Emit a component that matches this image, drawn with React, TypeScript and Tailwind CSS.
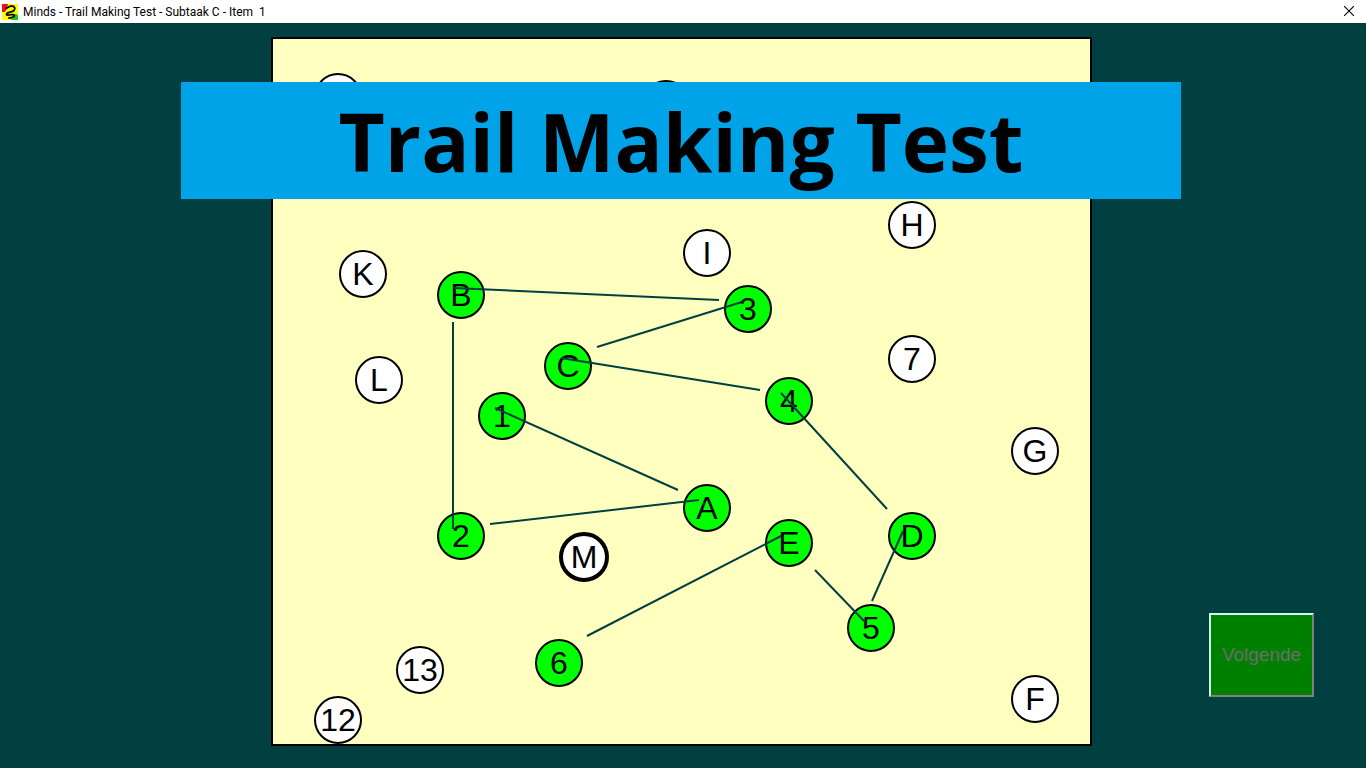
import { useState } from "react";

type TrailNode = { label: string; x: number; y: number; done?: boolean }
type Line = { x1: number; y1: number; x2: number; y2: number }

// centre of every circle, measured from the inside corner of the board
const nodes: TrailNode[] = [
    { label: '', x: 65, y: 58 },
    { label: '', x: 393, y: 65 },
    { label: 'H', x: 639, y: 186 },
    { label: 'I', x: 434, y: 214 },
    { label: 'K', x: 90, y: 235 },
    { label: 'B', x: 188, y: 256, done: true },
    { label: '3', x: 475, y: 270, done: true },
    { label: '7', x: 639, y: 320 },
    { label: 'C', x: 295, y: 327, done: true },
    { label: 'L', x: 106, y: 341 },
    { label: '4', x: 516, y: 362, done: true },
    { label: '1', x: 229, y: 377, done: true },
    { label: 'G', x: 762, y: 412 },
    { label: 'A', x: 434, y: 469, done: true },
    { label: '2', x: 188, y: 497, done: true },
    { label: 'D', x: 639, y: 497, done: true },
    { label: 'E', x: 516, y: 504, done: true },
    { label: 'M', x: 311, y: 518 },
    { label: '5', x: 598, y: 589, done: true },
    { label: '6', x: 286, y: 624, done: true },
    { label: '13', x: 147, y: 631 },
    { label: 'F', x: 762, y: 660 },
    { label: '12', x: 65, y: 681 },
]

const trail: Line[] = [
    { x1: 222, y1: 369, x2: 405, y2: 451 },
    { x1: 426, y1: 461, x2: 217, y2: 485 },
    { x1: 180, y1: 490, x2: 180, y2: 283 },
    { x1: 181, y1: 249, x2: 446, y2: 261 },
    { x1: 469, y1: 263, x2: 324, y2: 308 },
    { x1: 288, y1: 319, x2: 487, y2: 351 },
    { x1: 508, y1: 354, x2: 614, y2: 470 },
    { x1: 630, y1: 492, x2: 599, y2: 562 },
    { x1: 591, y1: 582, x2: 542, y2: 531 },
    { x1: 508, y1: 497, x2: 314, y2: 597 },
]

const Logo = () => (
    <svg viewBox="0 0 16 16" className="size-4" aria-hidden="true">
        <rect width="16" height="16" fill="#ffff00" />
        <path d="M0 0H6L5 4L3 8H0Z" fill="#f01010" />
        <path d="M9 16L11 13L14 10L16 11V16Z" fill="#10d020" />
        <path d="M4 4.500C5.500 4.500 6.500 2 9.500 2C13 2 13.500 5 12 6.500C10 8.500 4.500 8 4.500 10.500C4.500 12 9 9.800 12 10.800C13.500 12 11 14 7 14" fill="none" stroke="#101000" strokeWidth="1.800" strokeLinecap="round" />
    </svg>
)

const TitleBar = () => (
    <header className="flex h-[23px] items-center justify-between bg-white pl-0.5 pr-3">
        <div className="flex items-center gap-[5px]">
            <Logo />
            <span className="whitespace-pre font-['Roboto','Noto_Sans',sans-serif] text-[12px] leading-4 text-black">{'Minds - Trail Making Test - Subtaak C - Item  1'}</span>
        </div>
        <button type="button" aria-label="Sluiten" className="pb-0.5">
            <svg viewBox="0 0 10 10" className="size-2.5" stroke="#000" strokeWidth="1.100">
                <path d="M0 0L10 10M10 0L0 10" />
            </svg>
        </button>
    </header>
)

const Board = () => {
    const [active, setActive] = useState('M')

    return (
        <section className="relative border-2 border-black bg-[#ffffc0]">
            {nodes.map((node) => (
                <button
                    key={`${node.x}-${node.y}`}
                    type="button"
                    onClick={() => setActive(node.label)}
                    style={{ left: node.x, top: node.y }}
                    className={`absolute flex -translate-x-1/2 -translate-y-1/2 items-center justify-center rounded-full border-black text-[32px] leading-8 text-black ${node.done ? 'bg-[#00ff00]' : 'bg-white'} ${node.label === active ? 'size-[50px] border-4' : 'size-12 border-2'}`}
                >
                    {node.label}
                </button>
            ))}
            <svg className="pointer-events-none absolute inset-0 size-full" stroke="#004040" strokeWidth="2" aria-hidden="true">
                {trail.map((line, i) => (
                    <line key={i} {...line} />
                ))}
            </svg>
            <div className="absolute -left-[92px] -right-[91px] top-[43px] flex h-[117px] items-center justify-center bg-[#00a2e8]">
                <h1 className="whitespace-nowrap font-['Open_Sans',sans-serif] text-[80px] font-bold leading-none text-black">Trail Making Test</h1>
            </div>
        </section>
    )
}

const App = () => {
    return (
        <div className="flex min-h-screen flex-col bg-[#004040] font-['Liberation_Sans',Arial,sans-serif]">
            <TitleBar />
            <main className="grid flex-1 grid-cols-[271fr_821fr_274fr] pb-[22px] pt-3.5">
                <div></div>
                <Board />
                <aside className="flex items-end justify-end pb-[49px] pr-[52px]">
                    <button type="button" disabled className="h-[84px] w-[105px] border-2 border-b-[#808080] border-l-[#d0ffe8] border-r-[#808080] border-t-[#d0ffe8] bg-[#008000] text-[19px] text-[#6d6d6d]">Volgende</button>
                </aside>
            </main>
        </div>
    )
}
export default App;
